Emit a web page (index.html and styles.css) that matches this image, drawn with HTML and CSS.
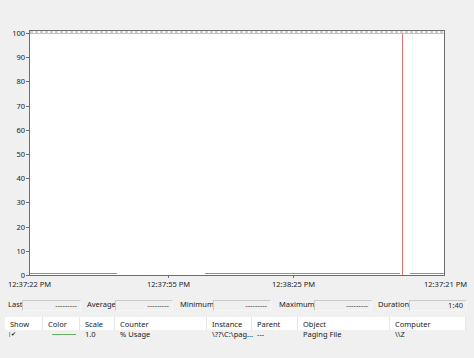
FILE: index.html
```html
<!DOCTYPE html>
<html lang="en">
<head>
	<meta charset="UTF-8"/>
	<title>Performance Monitor</title>
	<link rel="stylesheet" href="styles.css">
</head>
<body>

<div id="monitor">
	<div class="graph">
		<div class="y-labels">
			<span>100</span><span>90</span><span>80</span><span>70</span><span>60</span><span>50</span>
			<span>40</span><span>30</span><span>20</span><span>10</span><span>0</span>
		</div>
		<svg class="plot" width="420" height="249" viewBox="0 0 420 249">
			<rect x="3.5" y="0.5" width="415" height="245" fill="#fff" stroke="#6e6e6e"/>
			<line x1="4" y1="2" x2="418" y2="2" stroke="#9a9a9a" stroke-dasharray="3 2"/>
			<line x1="4" y1="3.5" x2="418" y2="3.5" stroke="#c4c4c4"/>
			<!-- y ticks -->
			<g stroke="#6e6e6e">
				<line x1="0" y1="3.5" x2="3" y2="3.5"/>
				<line x1="0" y1="27.5" x2="3" y2="27.5"/>
				<line x1="0" y1="51.5" x2="3" y2="51.5"/>
				<line x1="0" y1="76.5" x2="3" y2="76.5"/>
				<line x1="0" y1="100.5" x2="3" y2="100.5"/>
				<line x1="0" y1="124.5" x2="3" y2="124.5"/>
				<line x1="0" y1="148.5" x2="3" y2="148.5"/>
				<line x1="0" y1="172.5" x2="3" y2="172.5"/>
				<line x1="0" y1="197.5" x2="3" y2="197.5"/>
				<line x1="0" y1="221.5" x2="3" y2="221.5"/>
				<line x1="0" y1="245.5" x2="3" y2="245.5"/>
				<line x1="142.5" y1="246" x2="142.5" y2="248"/>
				<line x1="267.5" y1="246" x2="267.5" y2="248"/>
			</g>
			<line x1="386.5" y1="4" x2="386.5" y2="245" stroke="#eef8f8"/>
			<line x1="376.5" y1="4" x2="376.5" y2="245" stroke="#e07070"/>
			<g stroke="#68b068">
				<line x1="4" y1="243.5" x2="91" y2="243.5"/>
				<line x1="179" y1="243.5" x2="374" y2="243.5"/>
				<line x1="384" y1="243.5" x2="418" y2="243.5"/>
			</g>
		</svg>
	</div>

	<div class="x-labels">
		<span class="first">12:37:22 PM</span>
		<span class="second">12:37:55 PM</span>
		<span class="third">12:38:25 PM</span>
		<span class="last">12:37:21 PM</span>
	</div>

	<div class="stats">
		<span class="label l-last">Last</span><span class="value">---------</span>
		<span class="label l-avg">Average</span><span class="value">---------</span>
		<span class="label l-min">Minimum</span><span class="value">---------</span>
		<span class="label l-max">Maximum</span><span class="value">---------</span>
		<span class="label l-dur">Duration</span><span class="value">1:40</span>
	</div>

	<div class="legend">
		<div class="head">Show</div>
		<div class="head">Color</div>
		<div class="head">Scale</div>
		<div class="head">Counter</div>
		<div class="head">Instance</div>
		<div class="head">Parent</div>
		<div class="head">Object</div>
		<div class="head">Computer</div>

		<div class="cell check">|&#10004;</div>
		<div class="cell"><span class="swatch"></span></div>
		<div class="cell">1.0</div>
		<div class="cell">% Usage</div>
		<div class="cell">\??\C:\pag...</div>
		<div class="cell">---</div>
		<div class="cell">Paging File</div>
		<div class="cell">\\Z</div>
	</div>
</div>

</body>
</html>
```

FILE: styles.css
```css
	html {
		font-family: "Noto Sans", "Open Sans", sans-serif;
		font-size: 7.5px;
		color: #222;
	}
	body {
		margin: 0;
		padding: 0;
		background-color: #f0f0f0;
	}
	#monitor {
		width: 474px;
		height: 358px;
		display: flex;
		flex-direction: column;
	}
	.graph {
		display: flex;
		align-items: flex-start;
		padding-top: 29px;
	}
	.y-labels {
		width: 25px;
		height: 250px;
		margin-right: 1px;
		display: flex;
		flex-direction: column;
		justify-content: space-between;
		align-items: flex-end;
	}
	.y-labels span {
		height: 8px;
		line-height: 8px;
	}
	.plot {
		display: block;
		margin-top: 1px;
	}
	.x-labels {
		display: flex;
		margin-top: 1px;
		padding-left: 8px;
		height: 8px;
		line-height: 8px;
	}
	.x-labels span {
		width: 42px;
		white-space: nowrap;
	}
	.x-labels .second {
		margin-left: 97px;
		text-align: center;
	}
	.x-labels .third {
		margin-left: 83px;
		text-align: center;
	}
	.x-labels .last {
		margin-left: 110px;
		text-align: right;
	}
	.stats {
		display: grid;
		grid-template-columns: 14px 59px 34px 58px 40px 58px 43px 58px 37px 58px;
		margin-top: 12px;
		padding-left: 8px;
		height: 11px;
		line-height: 9px;
	}
	.stats .label {
		white-space: nowrap;
	}
	.l-avg, .l-dur { padding-left: 6px; }
	.l-min { padding-left: 7px; }
	.l-max { padding-left: 8px; }
	.stats .value {
		border: 1px solid #c9c9c9;
		border-bottom-color: #f7f7f7;
		border-right-color: #f7f7f7;
		text-align: right;
		padding-right: 3px;
		color: #333;
	}
	.legend {
		display: grid;
		grid-template-columns: 38px 37px 35px 92px 45px 46px 92px 76px;
		margin-top: 6px;
		margin-left: 5px;
	}
	.legend .head {
		background-color: #fff;
		border-right: 1px solid #e6e6e6;
		height: 13px;
		line-height: 14px;
		padding-left: 5px;
	}
	.legend .cell {
		height: 10px;
		line-height: 8px;
		padding-left: 5px;
		white-space: nowrap;
	}
	.legend .check {
		padding-left: 3px;
		font-size: 6px;
	}
	.swatch {
		display: inline-block;
		width: 24px;
		height: 1px;
		margin-left: 4px;
		vertical-align: middle;
		background-color: #68b068;
	}
```
